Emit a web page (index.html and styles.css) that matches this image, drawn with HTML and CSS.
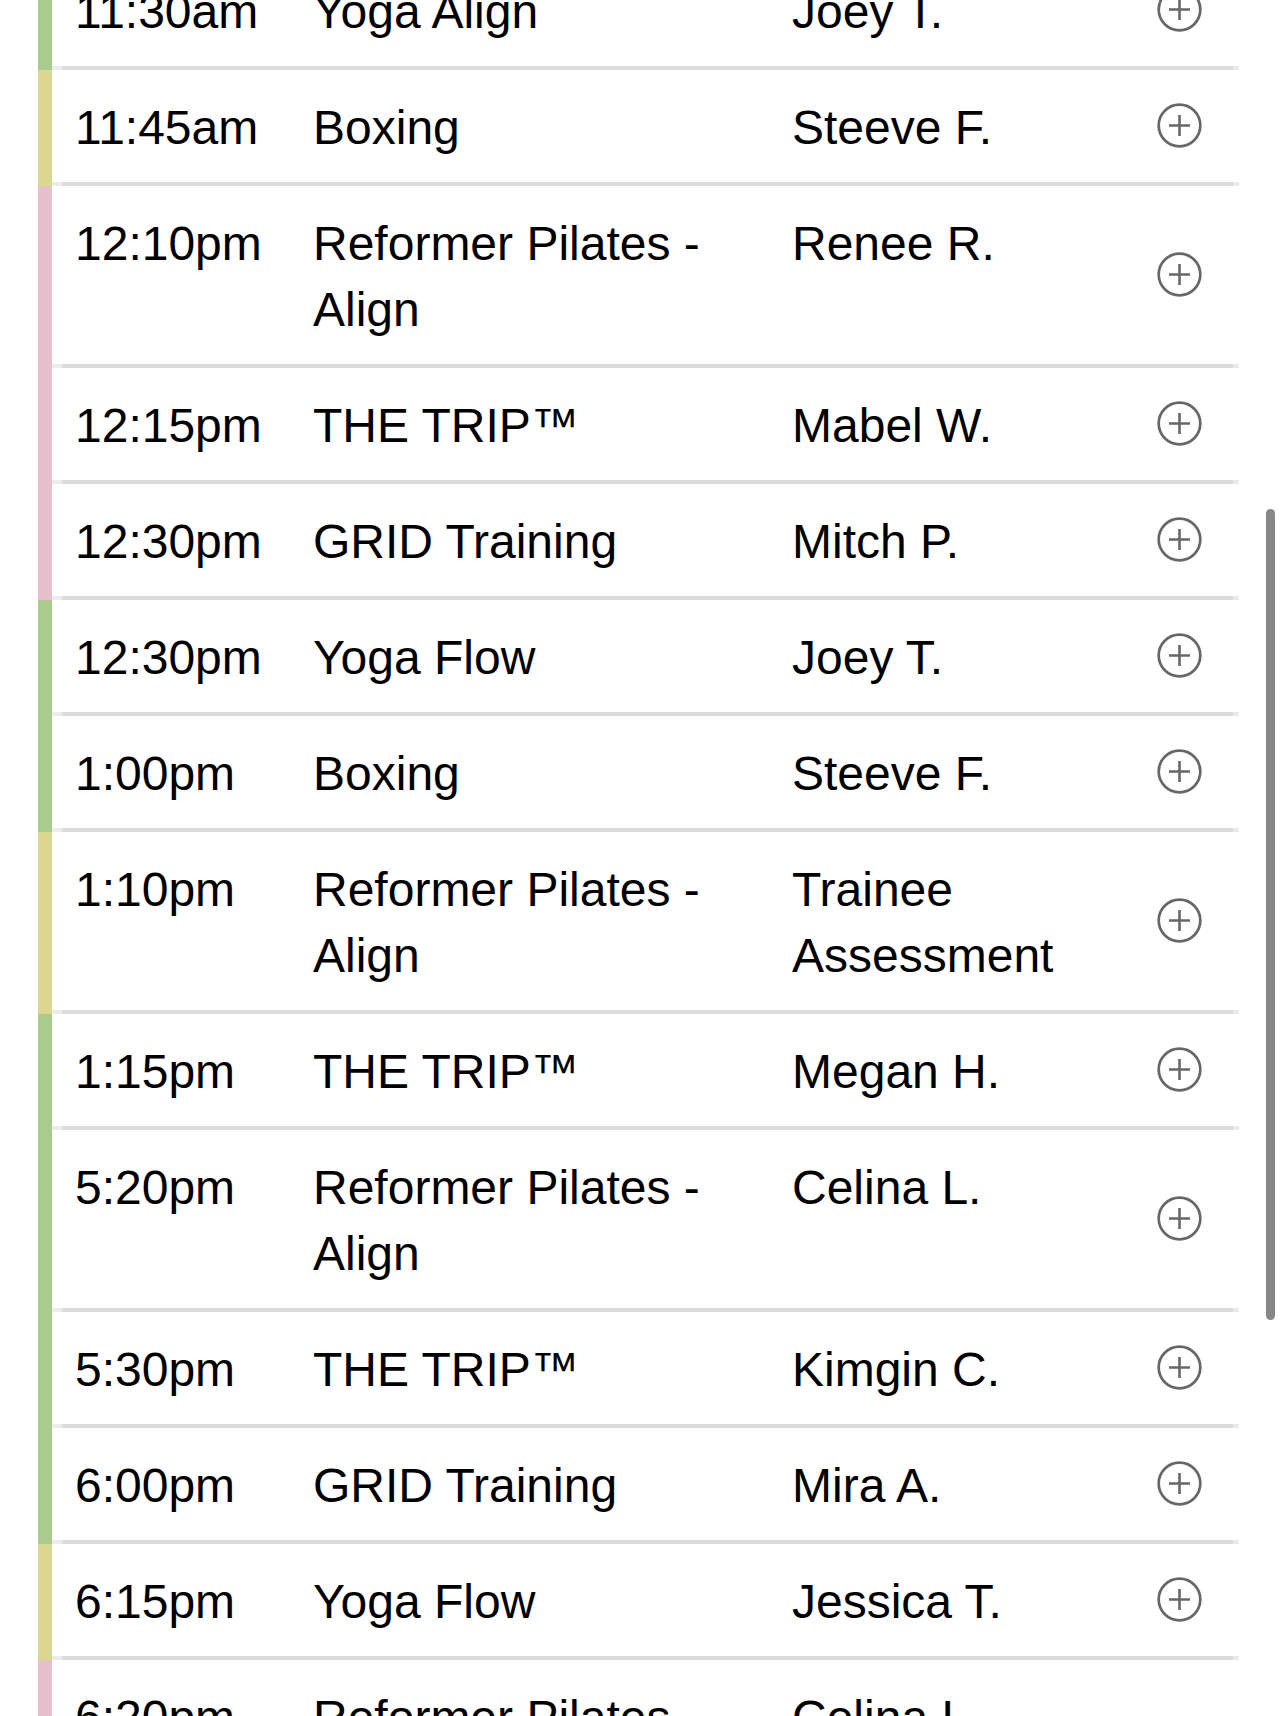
FILE: index.html
```html
<!DOCTYPE html>
<html lang="en">
<head>
<meta charset="utf-8">
<title>Class Schedule</title>
<link rel="stylesheet" href="styles.css">
</head>
<body>
<div class="schedule">
  <div class="row green"><div class="cells"><span class="time">11:30am</span><span class="name">Yoga Align</span><span class="coach">Joey T.</span><span class="add"><svg viewBox="0 0 45 45" width="45" height="45"><circle cx="22.5" cy="22.5" r="20.8"/><path d="M22.5 12v21M12 22.5h21"/></svg></span></div></div>
  <div class="row yellow"><div class="cells"><span class="time">11:45am</span><span class="name">Boxing</span><span class="coach">Steeve F.</span><span class="add"><svg viewBox="0 0 45 45" width="45" height="45"><circle cx="22.5" cy="22.5" r="20.8"/><path d="M22.5 12v21M12 22.5h21"/></svg></span></div></div>
  <div class="row pink"><div class="cells"><span class="time">12:10pm</span><span class="name">Reformer Pilates - Align</span><span class="coach">Renee R.</span><span class="add"><svg viewBox="0 0 45 45" width="45" height="45"><circle cx="22.5" cy="22.5" r="20.8"/><path d="M22.5 12v21M12 22.5h21"/></svg></span></div></div>
  <div class="row pink"><div class="cells"><span class="time">12:15pm</span><span class="name">THE TRIP™</span><span class="coach">Mabel W.</span><span class="add"><svg viewBox="0 0 45 45" width="45" height="45"><circle cx="22.5" cy="22.5" r="20.8"/><path d="M22.5 12v21M12 22.5h21"/></svg></span></div></div>
  <div class="row pink"><div class="cells"><span class="time">12:30pm</span><span class="name">GRID Training</span><span class="coach">Mitch P.</span><span class="add"><svg viewBox="0 0 45 45" width="45" height="45"><circle cx="22.5" cy="22.5" r="20.8"/><path d="M22.5 12v21M12 22.5h21"/></svg></span></div></div>
  <div class="row green"><div class="cells"><span class="time">12:30pm</span><span class="name">Yoga Flow</span><span class="coach">Joey T.</span><span class="add"><svg viewBox="0 0 45 45" width="45" height="45"><circle cx="22.5" cy="22.5" r="20.8"/><path d="M22.5 12v21M12 22.5h21"/></svg></span></div></div>
  <div class="row green"><div class="cells"><span class="time">1:00pm</span><span class="name">Boxing</span><span class="coach">Steeve F.</span><span class="add"><svg viewBox="0 0 45 45" width="45" height="45"><circle cx="22.5" cy="22.5" r="20.8"/><path d="M22.5 12v21M12 22.5h21"/></svg></span></div></div>
  <div class="row yellow"><div class="cells"><span class="time">1:10pm</span><span class="name">Reformer Pilates - Align</span><span class="coach">Trainee Assessment</span><span class="add"><svg viewBox="0 0 45 45" width="45" height="45"><circle cx="22.5" cy="22.5" r="20.8"/><path d="M22.5 12v21M12 22.5h21"/></svg></span></div></div>
  <div class="row green"><div class="cells"><span class="time">1:15pm</span><span class="name">THE TRIP™</span><span class="coach">Megan H.</span><span class="add"><svg viewBox="0 0 45 45" width="45" height="45"><circle cx="22.5" cy="22.5" r="20.8"/><path d="M22.5 12v21M12 22.5h21"/></svg></span></div></div>
  <div class="row green"><div class="cells"><span class="time">5:20pm</span><span class="name">Reformer Pilates - Align</span><span class="coach">Celina L.</span><span class="add"><svg viewBox="0 0 45 45" width="45" height="45"><circle cx="22.5" cy="22.5" r="20.8"/><path d="M22.5 12v21M12 22.5h21"/></svg></span></div></div>
  <div class="row green"><div class="cells"><span class="time">5:30pm</span><span class="name">THE TRIP™</span><span class="coach">Kimgin C.</span><span class="add"><svg viewBox="0 0 45 45" width="45" height="45"><circle cx="22.5" cy="22.5" r="20.8"/><path d="M22.5 12v21M12 22.5h21"/></svg></span></div></div>
  <div class="row green"><div class="cells"><span class="time">6:00pm</span><span class="name">GRID Training</span><span class="coach">Mira A.</span><span class="add"><svg viewBox="0 0 45 45" width="45" height="45"><circle cx="22.5" cy="22.5" r="20.8"/><path d="M22.5 12v21M12 22.5h21"/></svg></span></div></div>
  <div class="row yellow"><div class="cells"><span class="time">6:15pm</span><span class="name">Yoga Flow</span><span class="coach">Jessica T.</span><span class="add"><svg viewBox="0 0 45 45" width="45" height="45"><circle cx="22.5" cy="22.5" r="20.8"/><path d="M22.5 12v21M12 22.5h21"/></svg></span></div></div>
  <div class="row pink"><div class="cells"><span class="time">6:20pm</span><span class="name">Reformer Pilates - Align</span><span class="coach">Celina L.</span><span class="add"><svg viewBox="0 0 45 45" width="45" height="45"><circle cx="22.5" cy="22.5" r="20.8"/><path d="M22.5 12v21M12 22.5h21"/></svg></span></div></div>
</div>
<div class="scrollbar"></div>
</body>
</html>
```
FILE: styles.css
```css
html, body {
  margin: 0;
  padding: 0;
  background: #ffffff;
  overflow: hidden;
  height: 1716px;
}

body {
  font-family: "Liberation Sans", Arial, Helvetica, sans-serif;
  color: #000;
}

.schedule {
  margin-top: -46px;
  margin-left: 38px;
  width: 1201px;
}

.row {
  display: flex;
  border-left: 14px solid #a9cb8b;
}

.row.green { border-left-color: #a9cb8b; }
.row.yellow { border-left-color: #dcd790; }
.row.pink { border-left-color: #e6c1cd; }

.cells {
  flex: 1;
  position: relative;
  display: grid;
  grid-template-columns: 238px 479px 1fr 45px;
  align-items: start;
  padding: 25px 37px 25px 23px;
  font-size: 48px;
  line-height: 66px;
}

.cells::after {
  content: "";
  position: absolute;
  left: 0;
  right: 0;
  bottom: 0;
  height: 4px;
  background: linear-gradient(to right, #ececec 0, #ececec 10px, #dcdcdc 10px, #dcdcdc calc(100% - 6px), #e9e9e9 calc(100% - 6px));
}

.name {
  padding-right: 30px;
}

.coach {
  padding-right: 20px;
}

.add {
  align-self: center;
  width: 45px;
  height: 45px;
  margin-bottom: 5px;
  display: flex;
}

.add svg {
  fill: none;
  stroke: #676767;
  stroke-width: 2.7;
}

.add svg path {
  stroke-width: 2.6;
}

.scrollbar {
  position: fixed;
  left: 1266px;
  top: 509px;
  width: 9px;
  height: 811px;
  border-radius: 5px;
  background: #878787;
}
```
